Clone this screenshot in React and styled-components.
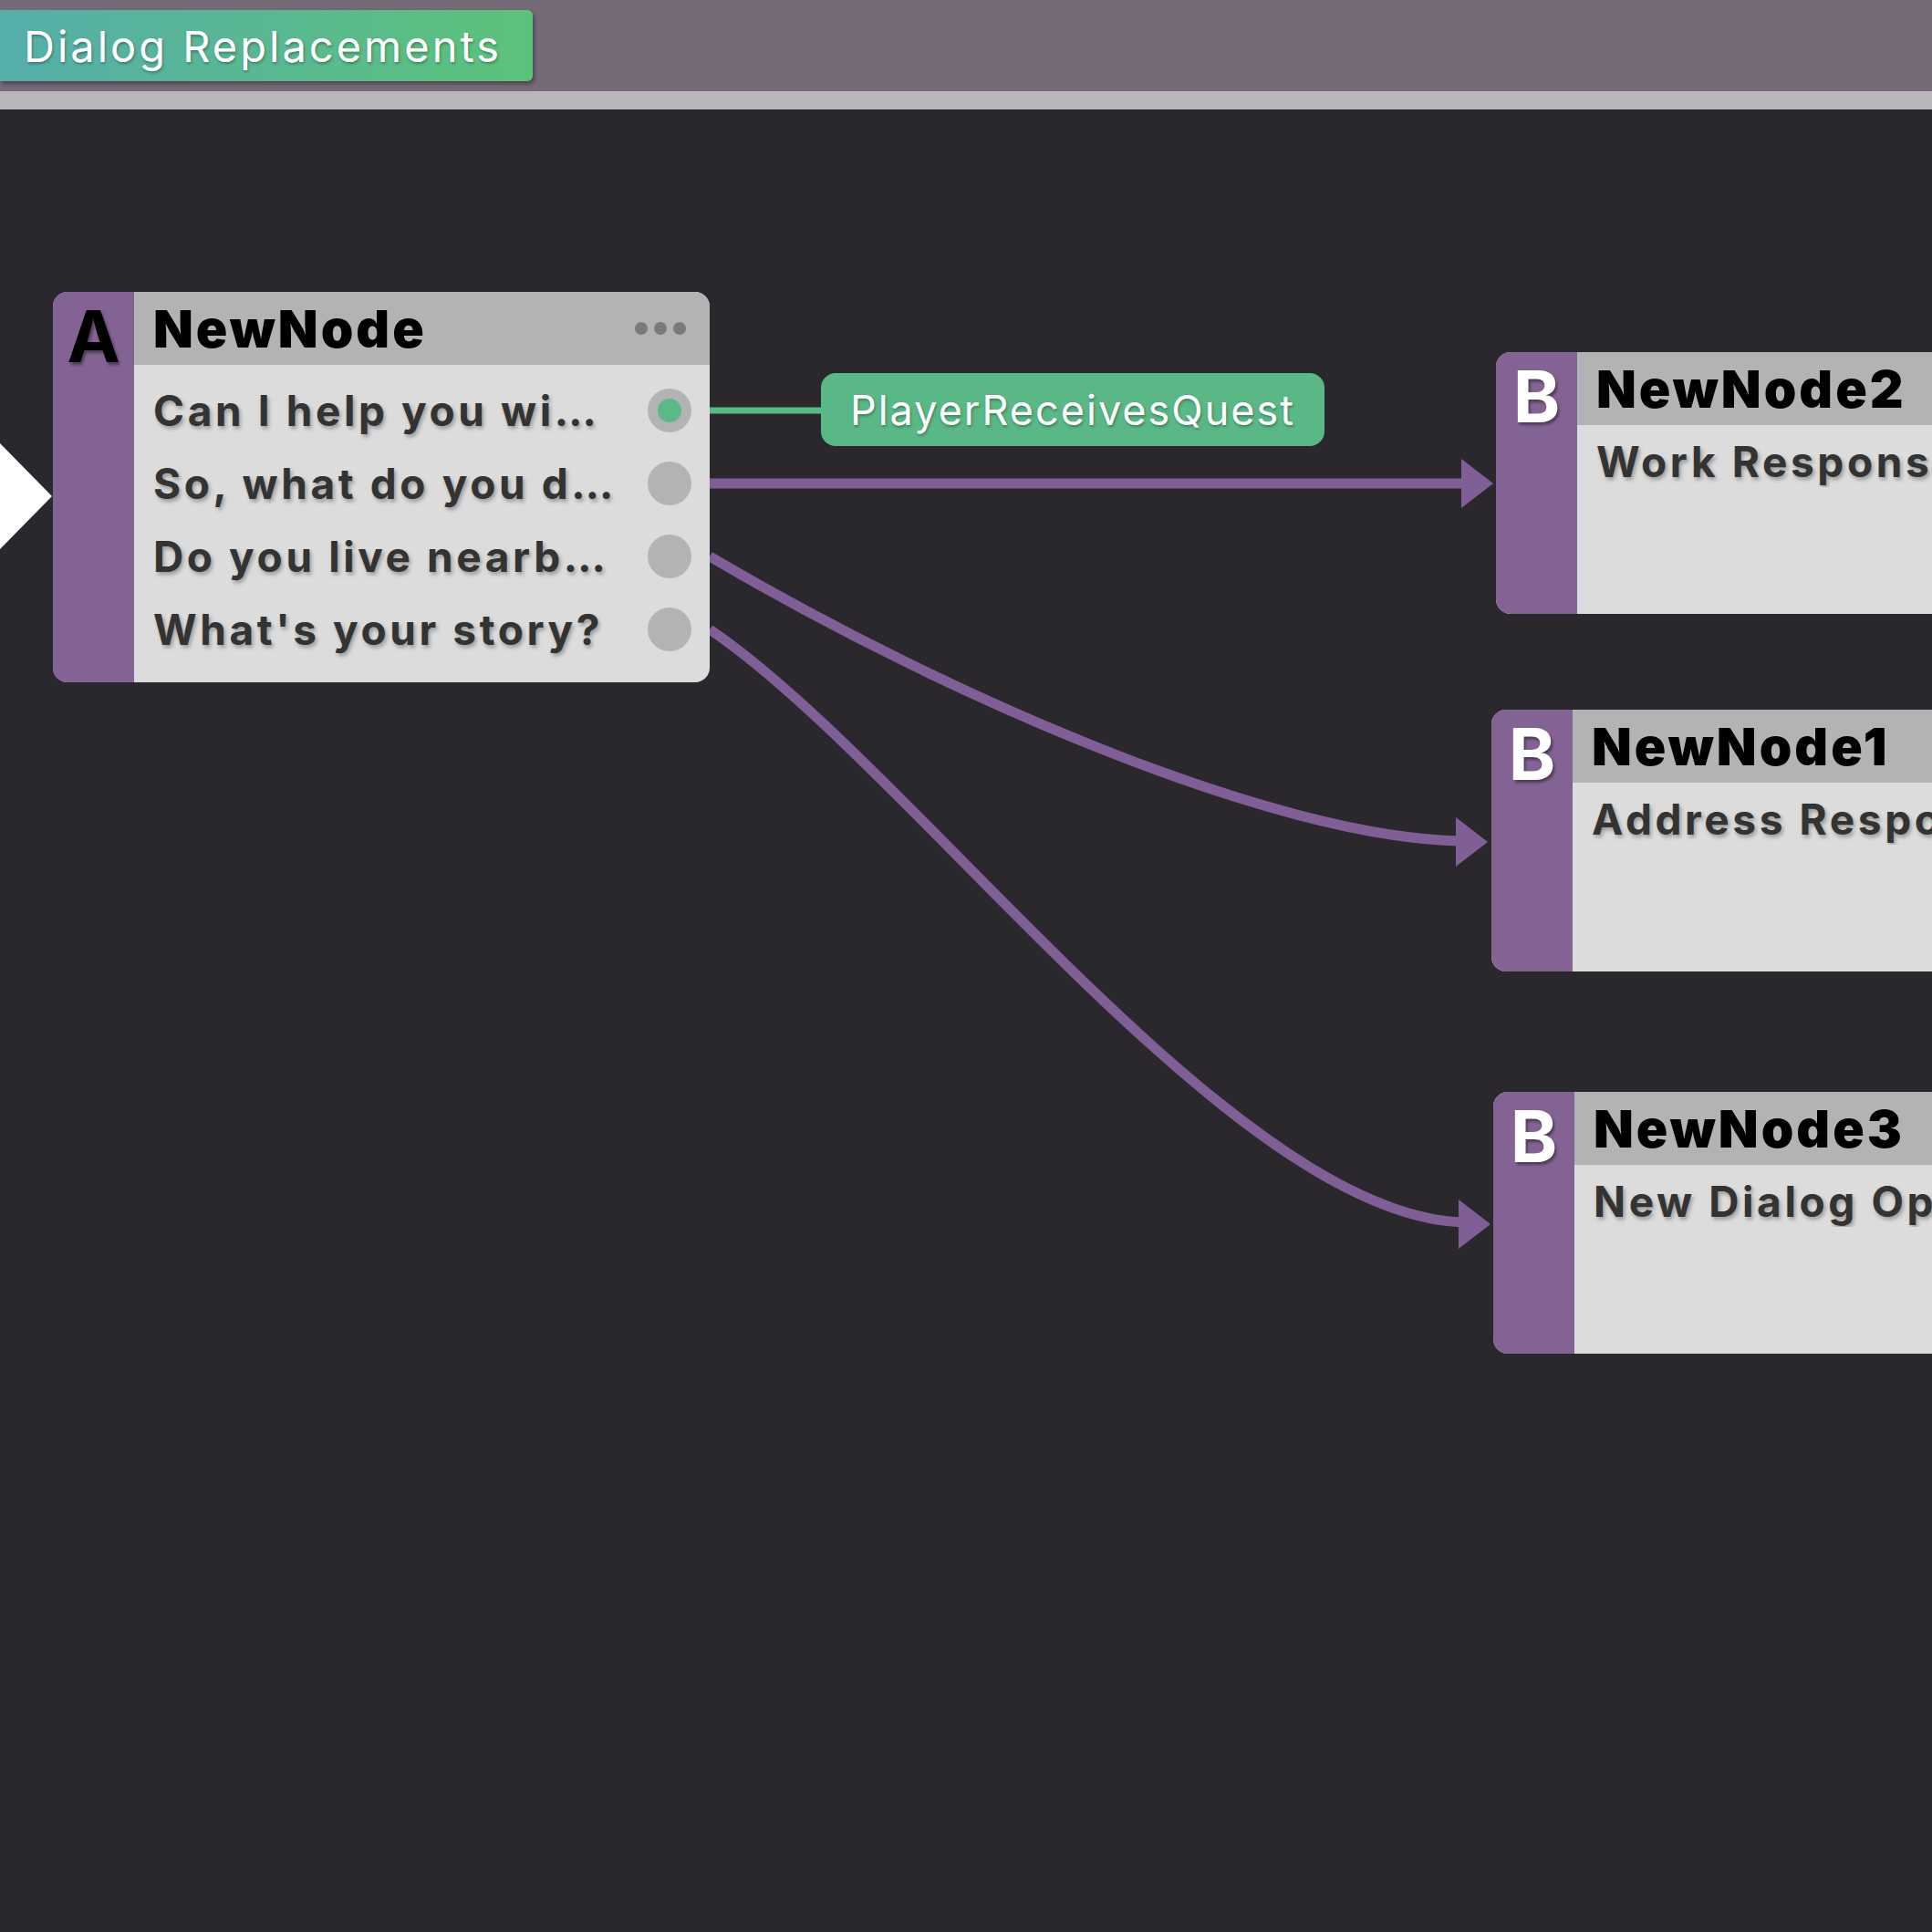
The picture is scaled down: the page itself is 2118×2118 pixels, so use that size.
import React from "react";
import styled, { createGlobalStyle } from "styled-components";

const Global = createGlobalStyle`
  html, body { margin: 0; padding: 0; background: #2a282c; }
  body { font-family: Inter, "Open Sans", sans-serif; }
`;

const Page = styled.div`
  width: 2118px; height: 2118px; overflow: hidden;
  display: flex; flex-direction: column; background: #2a282c;
`;
const TopBar = styled.div`
  background: #766a78; display: flex; align-items: flex-start;
  padding-top: 11px; box-sizing: border-box; border-bottom: 20px solid #b8b6b8; flex: none;
  height: 120px;
`;
const TabButton = styled.div`
  width: 584px; height: 78px; box-sizing: border-box; padding-left: 26px;
  display: flex; align-items: center; color: #fff; font-size: 47px; font-weight: 400;
  letter-spacing: 3px; border-radius: 0 6px 6px 0;
  background: linear-gradient(90deg, #56aeaa, #5cc27a);
  box-shadow: 2px 3px 4px rgba(0,0,0,0.35);
  text-shadow: 1px 2px 3px rgba(0,0,0,0.3);
`;
const Canvas = styled.div`position: relative; flex: 1;`;
const Edges = styled.svg`position: absolute; left: 0; top: 0;`;

const Node = styled.div`
  position: absolute; left: ${p => p.x}px; top: ${p => p.y}px;
  width: ${p => p.w}px; height: ${p => p.h}px; display: flex;
  border-radius: 16px; overflow: hidden; background: #dcdcdc;
`;
const Strip = styled.div`
  width: 89px; flex: none; background: #836394; display: flex; justify-content: center;
  font-weight: 700; font-size: 78px; line-height: 1; padding-top: 10px; box-sizing: border-box;
  color: ${p => p.light ? "#fff" : "#000"};
  text-shadow: 2px 3px 3px rgba(0,0,0,0.4);
`;
const Main = styled.div`flex: 1; display: flex; flex-direction: column; min-width: 0;`;
const Header = styled.div`
  height: 80px; flex: none; background: #b3b3b3; display: flex; align-items: center;
  padding: 0 26px 0 21px; font-size: 57px; font-weight: 900; color: #000; white-space: nowrap;
  letter-spacing: 3px;
`;
const Title = styled.span`flex: 1;`;
const Dots = styled.span`display: flex; gap: 7px;
  & > i { width: 14px; height: 14px; border-radius: 50%; background: #7a7a7a; display: block; }`;
const Rows = styled.div`display: flex; flex-direction: column; padding-top: 10px;`;
const Row = styled.div`
  height: 80px; display: flex; align-items: center; padding: 0 20px 0 21px;
  font-size: 46px; font-weight: 700; color: #333; letter-spacing: 3.6px; white-space: nowrap;
  text-shadow: 2px 3px 4px rgba(0,0,0,0.3);
`;
const RowText = styled.span`flex: 1;`;
const Port = styled.span`
  width: 48px; height: 48px; border-radius: 50%; background: #b3b3b3; flex: none;
  display: flex; align-items: center; justify-content: center;
  & > i { width: 26px; height: 26px; border-radius: 50%; background: #5cb987; display: ${p => p.active ? "block" : "none"}; }
`;
const Body = styled.div`
  padding: 12px 20px 0 21px; font-size: 46px; font-weight: 700; color: #333; letter-spacing: 3.6px;
  white-space: nowrap; overflow: hidden; text-shadow: 2px 3px 4px rgba(0,0,0,0.3);
`;
const Label = styled.div`
  position: absolute; left: 900px; top: 289px; width: 552px; height: 80px;
  border-radius: 16px; background: #5ab786; color: #fff; font-size: 45px; letter-spacing: 2px;
  display: flex; align-items: center; justify-content: center;
  text-shadow: 1px 2px 3px rgba(0,0,0,0.3);
`;
const Entry = styled.div`
  position: absolute; left: 0; top: 366px; width: 0; height: 0;
  border-top: 58px solid transparent; border-bottom: 58px solid transparent; border-left: 57px solid #fff;
`;

const P = "#7f5f96";
const OY = 120;

export default function App() {
  const rows = ["Can I help you wi…", "So, what do you d…", "Do you live nearb…", "What's your story?"];
  return (
    <Page>
      <Global />
      <TopBar><TabButton>Dialog Replacements</TabButton></TopBar>
      <Canvas>
        <Edges width="2118" height="2000">
          <line x1="734" y1={450 - OY} x2="900" y2={450 - OY} stroke="#5ab786" strokeWidth="7" />
          <path d={`M778 ${530 - OY} L1605 ${530 - OY}`} stroke={P} strokeWidth="11" fill="none" />
          <path d={`M778 ${610 - OY} C 1050 650, 1400 ${918 - OY}, 1600 ${922 - OY}`} stroke={P} strokeWidth="11" fill="none" />
          <path d={`M778 ${690 - OY} C 1000 720, 1350 ${1330 - OY}, 1603 ${1340 - OY}`} stroke={P} strokeWidth="11" fill="none" />
          <polygon points={`1602,${503 - OY} 1637,${530 - OY} 1602,${557 - OY}`} fill={P} />
          <polygon points={`1596,${896 - OY} 1631,${923 - OY} 1596,${950 - OY}`} fill={P} />
          <polygon points={`1599,${1315 - OY} 1634,${1342 - OY} 1599,${1369 - OY}`} fill={P} />
        </Edges>
        <Entry />
        <Node x={58} y={320 - OY} w={720} h={428}>
          <Strip>A</Strip>
          <Main>
            <Header><Title>NewNode</Title><Dots><i /><i /><i /></Dots></Header>
            <Rows>
              {rows.map((r, i) => (
                <Row key={i}><RowText>{r}</RowText><Port active={i === 0}><i /></Port></Row>
              ))}
            </Rows>
          </Main>
        </Node>
        <Label>PlayerReceivesQuest</Label>
        {[
          { y: 386, t: "NewNode2", b: "Work Response", x: 1640 },
          { y: 778, t: "NewNode1", b: "Address Response", x: 1635 },
          { y: 1197, t: "NewNode3", b: "New Dialog Option", x: 1637 },
        ].map(n => (
          <Node key={n.t} x={n.x} y={n.y - OY} w={600} h={287}>
            <Strip light>B</Strip>
            <Main>
              <Header>{n.t}</Header>
              <Body>{n.b}</Body>
            </Main>
          </Node>
        ))}
      </Canvas>
    </Page>
  );
}
